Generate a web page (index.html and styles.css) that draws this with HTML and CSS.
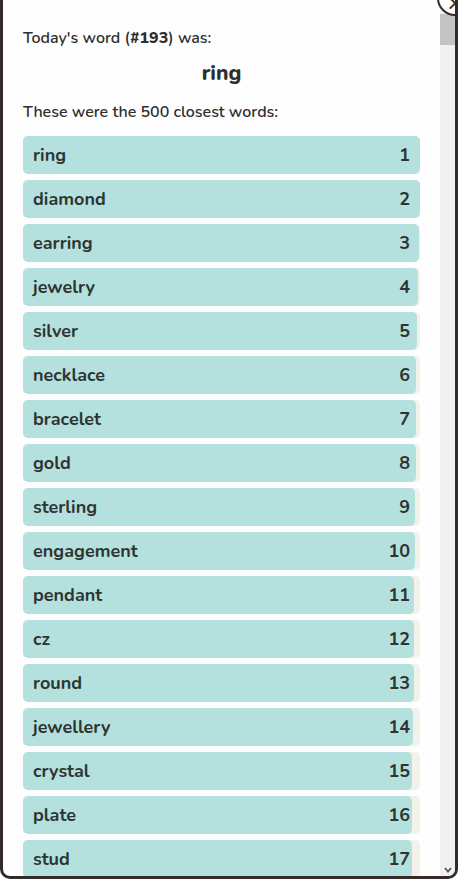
FILE: index.html
```html
<!DOCTYPE html>
<html lang="en">
<head>
<meta charset="utf-8">
<title>Closest words</title>
<link rel="stylesheet" href="styles.css">
</head>
<body>
<div class="modal">
  <div class="scroll">
    <p class="intro">Today's word (<b>#193</b>) was:</p>
    <h2 class="answer">ring</h2>
    <p class="intro sub">These were the 500 closest words:</p>
    <ol class="list">
      <li class="row"><span class="fill" style="width:100%"></span><span class="word">ring</span><span class="rank">1</span></li>
      <li class="row"><span class="fill" style="width:99.9%"></span><span class="word">diamond</span><span class="rank">2</span></li>
      <li class="row"><span class="fill" style="width:99.8%"></span><span class="word">earring</span><span class="rank">3</span></li>
      <li class="row"><span class="fill" style="width:99.6%"></span><span class="word">jewelry</span><span class="rank">4</span></li>
      <li class="row"><span class="fill" style="width:99.2%"></span><span class="word">silver</span><span class="rank">5</span></li>
      <li class="row"><span class="fill" style="width:99.1%"></span><span class="word">necklace</span><span class="rank">6</span></li>
      <li class="row"><span class="fill" style="width:99%"></span><span class="word">bracelet</span><span class="rank">7</span></li>
      <li class="row"><span class="fill" style="width:98.9%"></span><span class="word">gold</span><span class="rank">8</span></li>
      <li class="row"><span class="fill" style="width:98.8%"></span><span class="word">sterling</span><span class="rank">9</span></li>
      <li class="row"><span class="fill" style="width:98.7%"></span><span class="word">engagement</span><span class="rank">10</span></li>
      <li class="row"><span class="fill" style="width:98.6%"></span><span class="word">pendant</span><span class="rank">11</span></li>
      <li class="row"><span class="fill" style="width:98.5%"></span><span class="word">cz</span><span class="rank">12</span></li>
      <li class="row"><span class="fill" style="width:98.4%"></span><span class="word">round</span><span class="rank">13</span></li>
      <li class="row"><span class="fill" style="width:98.2%"></span><span class="word">jewellery</span><span class="rank">14</span></li>
      <li class="row"><span class="fill" style="width:98%"></span><span class="word">crystal</span><span class="rank">15</span></li>
      <li class="row"><span class="fill" style="width:98%"></span><span class="word">plate</span><span class="rank">16</span></li>
      <li class="row"><span class="fill" style="width:97.9%"></span><span class="word">stud</span><span class="rank">17</span></li>
    </ol>
  </div>
  <div class="bar" aria-hidden="true">
    <div class="bar-btn"></div>
    <div class="bar-thumb"></div>
    <div class="bar-track"></div>
    <div class="bar-btn down">
      <svg width="8" height="6" viewBox="0 0 8 6"><path d="M1 1 L4 4.5 L7 1" fill="none" stroke="#555" stroke-width="1.8"/></svg>
    </div>
  </div>
  <button class="close" aria-label="Close">×</button>
</div>
</body>
</html>
```
FILE: styles.css
```css
* { box-sizing: border-box; }
html, body {
  margin: 0;
  padding: 0;
  width: 458px;
  height: 879px;
  overflow: hidden;
  background: #ffffff;
  font-family: "Nunito", "Lato", "Open Sans", sans-serif;
  color: #2e2e2e;
}
.modal {
  position: relative;
  width: 458px;
  height: 879px;
  border: 3px solid #332b27;
  border-top: none;
  border-radius: 0 0 10px 10px;
  background: #fefefe;
  overflow: hidden;
  display: flex;
}
.scroll {
  flex: 1;
  min-width: 0;
  height: 100%;
  overflow: hidden;
  padding: 28px 20px 0 20px;
}
.bar {
  width: 15px;
  height: 100%;
  display: flex;
  flex-direction: column;
  background: #f1f1f1;
}
.bar-btn {
  height: 14px;
  flex: none;
  display: flex;
  align-items: center;
  justify-content: center;
}
.bar-btn.down { padding-top: 2px; }
.bar-thumb {
  height: 31px;
  flex: none;
  background: #c4c4c4;
}
.bar-track { flex: 1; }
.intro {
  margin: 0;
  font-size: 16px;
  line-height: 20px;
  font-weight: 600;
}
.intro b { font-weight: 800; }
.answer {
  margin: 13px 0 0 0;
  text-align: center;
  font-size: 21px;
  line-height: 24px;
  font-weight: 800;
}
.sub { margin-top: 17px; }
.list {
  list-style: none;
  margin: 14px 0 0 0;
  padding: 0;
  display: flex;
  flex-direction: column;
  gap: 6px;
}
.row {
  position: relative;
  height: 38px;
  flex: none;
  border-radius: 5px;
  background: #f4f1ea;
  display: flex;
  align-items: center;
  justify-content: space-between;
  padding: 0 10px;
  font-size: 18px;
  font-weight: 700;
  color: #2e3433;
}
.fill {
  position: absolute;
  left: 0;
  top: 0;
  bottom: 0;
  border-radius: 5px;
  background: #b4e1dd;
}
.word, .rank { position: relative; }
.close {
  position: absolute;
  right: -18px;
  top: -20px;
  width: 36px;
  height: 36px;
  border-radius: 50%;
  border: 2px solid #332b27;
  background: #ffffff;
  color: #332b27;
  font-size: 22px;
  line-height: 1;
  padding: 10px 0 0 7px;
  text-align: left;
  font-family: "DejaVu Sans", sans-serif;
}
```
